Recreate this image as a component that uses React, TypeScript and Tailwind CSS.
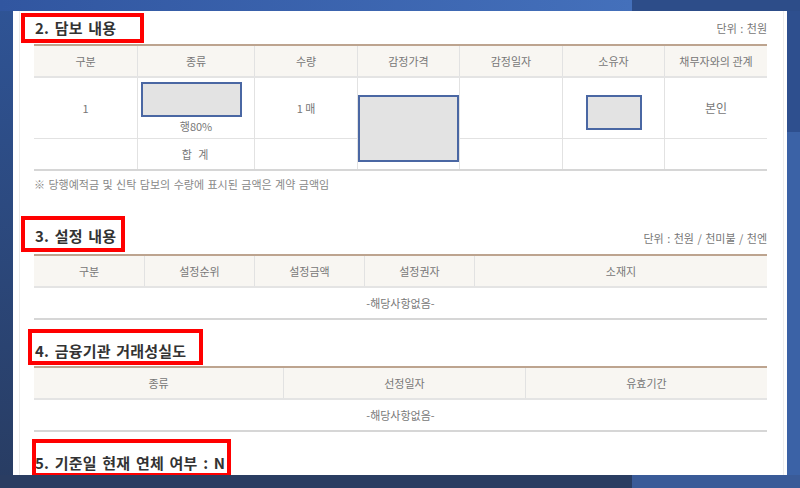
const font = "font-['Noto_Sans_CJK_KR','Noto_Sans',sans-serif]";

const cell = "flex items-center justify-center text-[11px] text-[#777] border-l border-[#e2e2e2] first:border-l-0";
const head = "grid h-[34px] border-t-2 border-b-2 border-t-[#bda48f] border-b-[#e4e4e4] bg-[#f8f6f2]";

function Redact({ className }: { className: string }) {
  return <div className={`absolute border-2 border-[#4a67a3] bg-[#e3e3e3] ${className}`} />;
}

function Heading({ title, unit, box, className }: { title: string; unit?: string; box: string; className: string }) {
  return (
    <div className={`relative flex justify-between ${className}`}>
      <div className={`absolute border-4 border-[#ff0000] ${box}`} />
      <span className="relative pl-[1px] text-[15px] font-bold leading-[20px] tracking-[0.2px] text-[#333] [word-spacing:2px]">
        {title}
      </span>
      {unit && <span className="text-[11px] leading-[16px] text-[#777] [word-spacing:1px]">{unit}</span>}
    </div>
  );
}

function EmptyTable({ cols, heads }: { cols: string; heads: string[] }) {
  return (
    <div>
      <div className={`${head} ${cols}`}>
        {heads.map((h) => (
          <div key={h} className={cell}>{h}</div>
        ))}
      </div>
      <div className="flex h-[32px] items-center justify-center border-b-2 border-[#d6d6d6] text-[11px] text-[#777]">
        -해당사항없음-
      </div>
    </div>
  );
}

export default function App() {
  const cols2 = "grid-cols-[103px_117px_103px_102px_103px_102px_103px]";
  return (
    <div
      className={`${font} h-[488px] w-[800px] overflow-hidden pl-[13px] pt-[11px] [background:linear-gradient(90deg,#3156a0,#4470bb_79%,#2d4d89_79%)_top/100%_11px_no-repeat,linear-gradient(90deg,#2a3d62_79%,#3a5b98_79%)_bottom/100%_13px_no-repeat,linear-gradient(180deg,#2f5496,#283c62)_left/13px_100%_no-repeat,linear-gradient(180deg,#2e4f8e_27%,#3b62a6_27%)_right/13px_100%_no-repeat]`}
    >
      <div className="flex h-[464px] w-[774px] overflow-hidden bg-white">
        <div className="ml-[6px] h-full w-[765px] border-x border-[#ececec] pl-[14px] pr-[16px]">
          {/* 2. 담보 내용 */}
          <Heading
            title="2. 담보 내용"
            unit="단위 : 천원"
            box="-left-[13px] top-[2px] h-[30px] w-[123px]"
            className="h-[33px] items-center"
          />
          <div className="relative">
            <div className={`${head} ${cols2}`}>
              {["구분", "종류", "수량", "감정가격", "감정일자", "소유자", "채무자와의 관계"].map((h) => (
                <div key={h} className={cell}>{h}</div>
              ))}
            </div>
            <div className={`grid h-[61px] border-b border-[#e2e2e2] ${cols2}`}>
              <div className={cell}>1</div>
              <div className={`${cell} flex-col !justify-end pb-[4px]`}>
                <span className="leading-[16px]">행80%</span>
              </div>
              <div className={cell}>1 매</div>
              <div className={cell} />
              <div className={cell} />
              <div className={cell} />
              <div className={`${cell} text-[12px]`}>본인</div>
            </div>
            <div className={`grid h-[32px] border-b-2 border-[#d6d6d6] ${cols2}`}>
              <div className={cell} />
              <div className={`${cell} tracking-[2px]`}>합 계</div>
              <div className={cell} />
              <div className={cell} />
              <div className={cell} />
              <div className={cell} />
              <div className={cell} />
            </div>
            <Redact className="left-[107px] top-[38px] h-[35px] w-[101px]" />
            <Redact className="left-[324px] top-[51px] h-[67px] w-[101px]" />
            <Redact className="left-[552px] top-[51px] h-[35px] w-[56px]" />
          </div>
          <p className="mt-[5px] text-[11px] leading-[16px] text-[#888] [word-spacing:1px]">
            ※ 당행예적금 및 신탁 담보의 수량에 표시된 금액은 계약 금액임
          </p>

          {/* 3. 설정 내용 */}
          <Heading
            title="3. 설정 내용"
            unit="단위 : 천원 / 천미불 / 천엔"
            box="-left-[13px] top-[24px] h-[36px] w-[104px]"
            className="h-[62px] items-end pb-[8px]"
          />
          <EmptyTable
            cols="grid-cols-[110px_110px_110px_110px_293px]"
            heads={["구분", "설정순위", "설정금액", "설정권자", "소재지"]}
          />

          {/* 4. 금융기관 거래성실도 */}
          <Heading
            title="4. 금융기관 거래성실도"
            box="-left-[6px] top-[9px] h-[36px] w-[175px]"
            className="h-[46px] items-end pb-[5px]"
          />
          <EmptyTable
            cols="grid-cols-[249px_242px_242px]"
            heads={["종류", "선정일자", "유효기간"]}
          />

          {/* 5. 기준일 현재 연체 여부 */}
          <Heading
            title="5. 기준일 현재 연체 여부 : N"
            box="-left-[2px] top-[7px] h-[38px] w-[199px]"
            className="h-[45px] items-start pt-[21px]"
          />
        </div>
      </div>
    </div>
  );
}
